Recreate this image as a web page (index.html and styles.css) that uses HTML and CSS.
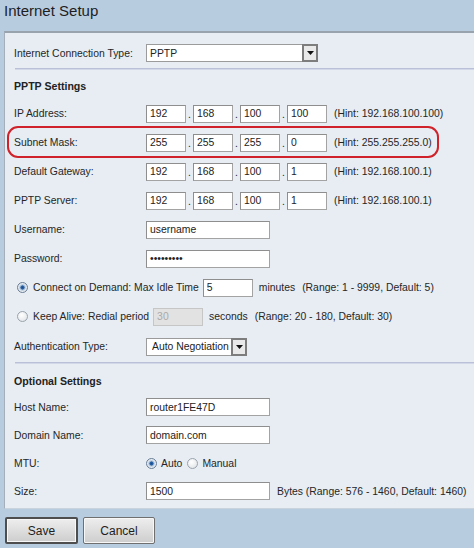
FILE: index.html
```html
<!DOCTYPE html>
<html lang="en">
<head>
<meta charset="utf-8">
<title>Internet Setup</title>
<link rel="stylesheet" href="styles.css">
</head>
<body>
<h1 class="page-title">Internet Setup</h1>

<form class="panel">
  <div class="row row-top">
    <label class="label">Internet Connection Type:</label>
    <div class="select select-wide">
      <select><option>PPTP</option></select>
      <span class="select-btn"><svg width="7" height="4" viewBox="0 0 7 4"><path d="M0 0h7L3.5 4z" fill="#111"/></svg></span>
    </div>
  </div>

  <hr class="divider">

  <h2 class="section-title">PPTP Settings</h2>

  <div class="row">
    <label class="label">IP Address:</label>
    <div class="ip">
      <input class="octet" value="192"><span class="dot">.</span><input class="octet" value="168"><span class="dot">.</span><input class="octet" value="100"><span class="dot">.</span><input class="octet" value="100">
    </div>
    <span class="hint">(Hint: 192.168.100.100)</span>
  </div>

  <div class="row row-marked">
    <label class="label">Subnet Mask:</label>
    <div class="ip">
      <input class="octet" value="255"><span class="dot">.</span><input class="octet" value="255"><span class="dot">.</span><input class="octet" value="255"><span class="dot">.</span><input class="octet" value="0">
    </div>
    <span class="hint">(Hint: 255.255.255.0)</span>
    <span class="mark"></span>
  </div>

  <div class="row">
    <label class="label">Default Gateway:</label>
    <div class="ip">
      <input class="octet" value="192"><span class="dot">.</span><input class="octet" value="168"><span class="dot">.</span><input class="octet" value="100"><span class="dot">.</span><input class="octet" value="1">
    </div>
    <span class="hint">(Hint: 192.168.100.1)</span>
  </div>

  <div class="row">
    <label class="label">PPTP Server:</label>
    <div class="ip">
      <input class="octet" value="192"><span class="dot">.</span><input class="octet" value="168"><span class="dot">.</span><input class="octet" value="100"><span class="dot">.</span><input class="octet" value="1">
    </div>
    <span class="hint">(Hint: 192.168.100.1)</span>
  </div>

  <div class="row">
    <label class="label">Username:</label>
    <input class="text" value="username">
  </div>

  <div class="row">
    <label class="label">Password:</label>
    <input class="text" type="password" value="password1">
  </div>

  <div class="row row-option">
    <input class="radio" type="radio" name="mode" checked>
    <span class="opt-text">Connect on Demand: Max Idle Time</span>
    <input class="text short idle" value="5">
    <span class="unit">minutes</span>
    <span class="range">(Range: 1 - 9999, Default: 5)</span>
  </div>

  <div class="row row-option">
    <input class="radio" type="radio" name="mode">
    <span class="opt-text">Keep Alive: Redial period</span>
    <input class="text short redial" value="30" disabled>
    <span class="unit">seconds</span>
    <span class="range">(Range: 20 - 180, Default: 30)</span>
  </div>

  <div class="row row-auth">
    <label class="label">Authentication Type:</label>
    <div class="select select-auth">
      <select><option>Auto Negotiation</option></select>
      <span class="select-btn"><svg width="7" height="4" viewBox="0 0 7 4"><path d="M0 0h7L3.5 4z" fill="#111"/></svg></span>
    </div>
  </div>

  <hr class="divider">

  <h2 class="section-title section-optional">Optional Settings</h2>

  <div class="row row-opt">
    <label class="label">Host Name:</label>
    <input class="text" value="router1FE47D">
  </div>

  <div class="row row-opt">
    <label class="label">Domain Name:</label>
    <input class="text" value="domain.com">
  </div>

  <div class="row row-opt">
    <label class="label">MTU:</label>
    <input class="radio" type="radio" name="mtu" checked>
    <span class="radio-text">Auto</span>
    <input class="radio" type="radio" name="mtu">
    <span class="radio-text">Manual</span>
  </div>

  <div class="row row-opt">
    <label class="label">Size:</label>
    <input class="text" value="1500">
    <span class="bytes">Bytes (Range: 576 - 1460, Default: 1460)</span>
  </div>
</form>

<div class="actions">
  <button class="btn btn-default" type="button">Save</button>
  <button class="btn" type="button">Cancel</button>
</div>
</body>
</html>
```

FILE: styles.css
```css
html, body {
  margin: 0;
  padding: 0;
}

body {
  background: #b8cce0;
  font-family: "Liberation Sans", Arial, sans-serif;
  font-size: 10.4px;
  color: #262626;
  width: 474px;
  height: 548px;
  overflow: hidden;
}

.page-title {
  margin: 0;
  padding: 2px 0 0 4px;
  height: 31px;
  box-sizing: border-box;
  font-size: 15px;
  font-weight: normal;
  color: #1e1e1e;
  line-height: 18px;
}

.panel {
  margin: 0 0 0 4px;
  background: #e7edf3;
  border-top: 2px solid #98a3ae;
  border-left: 1px solid #a4afba;
  border-bottom: 1px solid #c9d3dd;
  padding: 5px 0 4px 9px;
  height: 478px;
  box-sizing: border-box;
}

.row {
  display: flex;
  align-items: center;
  height: 29px;
  position: relative;
}

.row-top {
  height: 30px;
}

.row-opt {
  height: 28px;
}

.row-auth {
  height: 31px;
}

.label {
  width: 132px;
  flex: none;
}

.divider {
  margin: 0 0 0 1px;
  border: 0;
  border-top: 1px solid #b9c0d8;
  border-bottom: 1px solid #d3d8e8;
  height: 0;
}

.section-title {
  margin: 0;
  height: 29px;
  display: flex;
  align-items: center;
  padding-top: 2px;
  box-sizing: border-box;
  font-size: 10.6px;
  font-weight: bold;
  color: #222;
}

.section-optional {
  padding-top: 5px;
}

input, select {
  font-family: inherit;
  font-size: inherit;
  color: #222;
}

input.octet,
input.text {
  box-sizing: border-box;
  height: 18px;
  margin: 0;
  padding: 0 3px;
  background: #fff;
  border: 1px solid #a3a3a3;
  border-top-color: #8e8e8e;
  border-left-color: #8e8e8e;
}

.ip {
  display: flex;
  align-items: center;
}

input.octet {
  width: 40px;
}

.dot {
  width: 7px;
  text-align: center;
  align-self: flex-end;
  line-height: 16px;
}

.hint {
  margin-left: 7px;
}

/* red highlight ring drawn around the subnet mask row */
.mark {
  position: absolute;
  left: -7px;
  top: -2px;
  width: 432px;
  height: 32px;
  box-sizing: border-box;
  border: 2px solid #d0222a;
  border-radius: 11px;
}

input.text {
  width: 124px;
}

input.text.short {
  width: 50px;
}

input.text[disabled] {
  background: #e2e2e2;
  color: #aaa;
  border-color: #c6c6c6;
}

.radio {
  appearance: none;
  -webkit-appearance: none;
  box-sizing: border-box;
  width: 11px;
  height: 11px;
  margin: 0;
  border-radius: 50%;
  border: 1px solid #9aa3ad;
  background: radial-gradient(circle at 40% 35%, #ffffff 0%, #e6e9ec 70%, #cfd4d9 100%);
  flex: none;
}

.radio:checked {
  border-color: #6a7e96;
  background: radial-gradient(circle at 50% 50%, #1c4a86 0%, #2c66ad 28%, #9eb6d2 36%, #e8eef4 60%, #cfd6de 100%);
}

.row-option .radio {
  margin-left: 3px;
}

.opt-text {
  margin-left: 5px;
}

.idle {
  margin-left: 4px !important;
}

.redial {
  margin-left: 4px !important;
}

.unit {
  margin-left: 6px;
}

.range {
  margin-left: 7px;
}

.radio-text {
  margin: 0 5px 0 4px;
}

.bytes {
  margin-left: 7px;
}

/* dropdowns: a plain box with a square arrow button laid over its right end */
.select {
  position: relative;
  height: 18px;
}

.select select {
  appearance: none;
  -webkit-appearance: none;
  box-sizing: border-box;
  width: 100%;
  height: 18px;
  margin: 0;
  padding: 0 3px;
  background: #fff;
  border: 1px solid #9b9b9b;
  border-radius: 0;
}

.select-wide {
  width: 172px;
}

.select-auth {
  width: 101px;
}

.select-auth select {
  padding-left: 5px;
}

.select-btn {
  position: absolute;
  right: 0;
  top: 0;
  width: 16px;
  height: 18px;
  box-sizing: border-box;
  border: 2px solid #7d7d7d;
  background: #e9e9e9;
  display: flex;
  align-items: center;
  justify-content: center;
}

.actions {
  display: flex;
  gap: 5px;
  padding: 8px 0 0 5px;
}

.btn {
  font-family: "Liberation Sans", Arial, sans-serif;
  font-size: 12px;
  color: #1e1e1e;
  width: 72px;
  height: 27px;
  margin: 0;
  padding: 0;
  border: 1px solid #6f6f6f;
  border-radius: 2px;
  background: linear-gradient(#eeeeee, #dcdcdc 55%, #cdcdcd);
  box-shadow: inset 0 0 0 1px #f7f7f7;
}

.btn-default {
  width: 73px;
  border: 2px solid #4e4e4e;
}
```
